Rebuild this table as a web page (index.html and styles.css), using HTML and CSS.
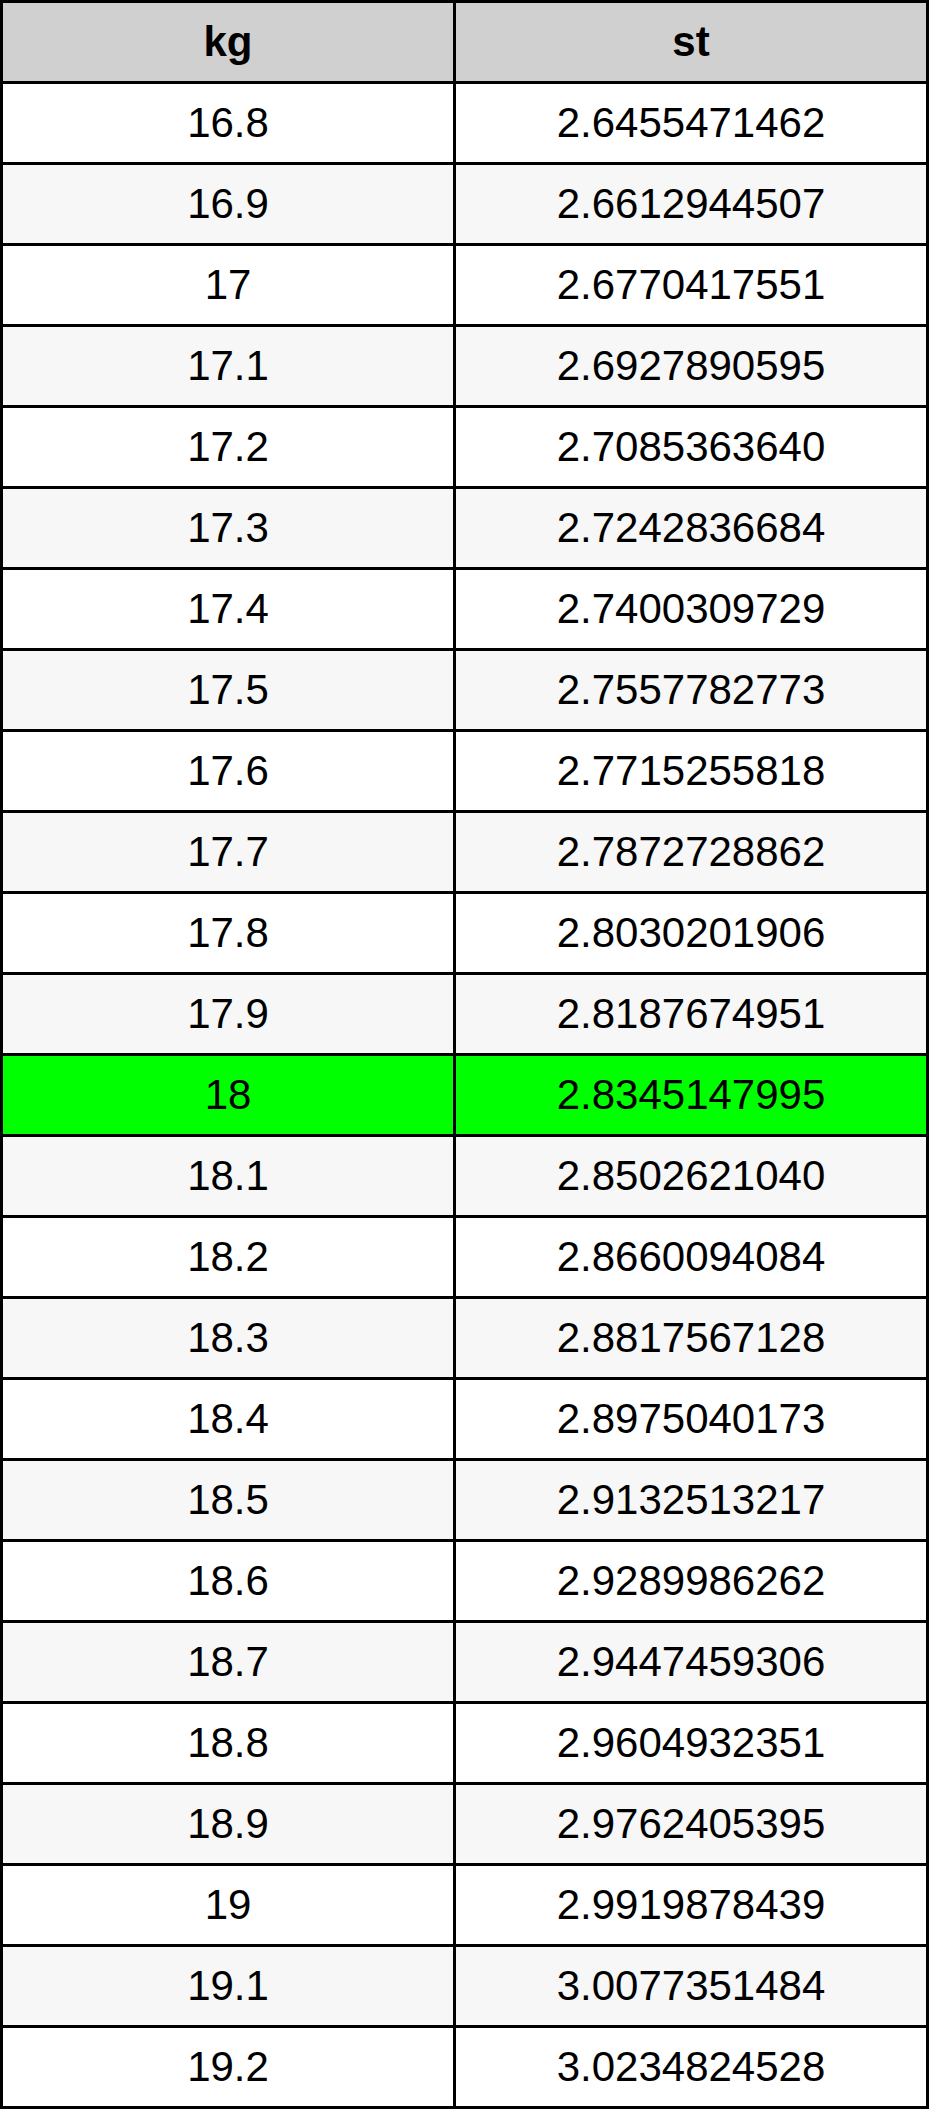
FILE: index.html
```html
<!DOCTYPE html>
<html lang="en">
<head>
<meta charset="utf-8">
<title>kg to st</title>
<link rel="stylesheet" href="styles.css">
</head>
<body>
<table class="conv">
<colgroup><col class="c1"><col class="c2"></colgroup>
<thead>
<tr><th>kg</th><th>st</th></tr>
</thead>
<tbody>
<tr><td>16.8</td><td>2.6455471462</td></tr>
<tr><td>16.9</td><td>2.6612944507</td></tr>
<tr><td>17</td><td>2.6770417551</td></tr>
<tr><td>17.1</td><td>2.6927890595</td></tr>
<tr><td>17.2</td><td>2.7085363640</td></tr>
<tr><td>17.3</td><td>2.7242836684</td></tr>
<tr><td>17.4</td><td>2.7400309729</td></tr>
<tr><td>17.5</td><td>2.7557782773</td></tr>
<tr><td>17.6</td><td>2.7715255818</td></tr>
<tr><td>17.7</td><td>2.7872728862</td></tr>
<tr><td>17.8</td><td>2.8030201906</td></tr>
<tr><td>17.9</td><td>2.8187674951</td></tr>
<tr class="hl"><td>18</td><td>2.8345147995</td></tr>
<tr><td>18.1</td><td>2.8502621040</td></tr>
<tr><td>18.2</td><td>2.8660094084</td></tr>
<tr><td>18.3</td><td>2.8817567128</td></tr>
<tr><td>18.4</td><td>2.8975040173</td></tr>
<tr><td>18.5</td><td>2.9132513217</td></tr>
<tr><td>18.6</td><td>2.9289986262</td></tr>
<tr><td>18.7</td><td>2.9447459306</td></tr>
<tr><td>18.8</td><td>2.9604932351</td></tr>
<tr><td>18.9</td><td>2.9762405395</td></tr>
<tr><td>19</td><td>2.9919878439</td></tr>
<tr><td>19.1</td><td>3.0077351484</td></tr>
<tr><td>19.2</td><td>3.0234824528</td></tr>
</tbody>
</table>
</body>
</html>
```
FILE: styles.css
```css
html, body {
  margin: 0;
  padding: 0;
  background: #ffffff;
}
.conv {
  border-collapse: collapse;
  table-layout: fixed;
  width: 929px;
  font-family: "Liberation Sans", Arial, sans-serif;
  font-size: 42px;
  color: #000000;
}
.c1 { width: 453px; }
.c2 { width: 473px; }
.conv tr {
  height: 81px;
}
.conv th,
.conv td {
  border: 3px solid #000000;
  padding: 0;
  text-align: center;
  vertical-align: middle;
}
.conv th {
  background: #d0d0d0;
  font-weight: bold;
}
.conv tbody tr {
  background: #ffffff;
}
.conv tbody tr:nth-child(even) {
  background: #f7f7f7;
}
.conv tbody tr.hl {
  background: #00ff00;
}
```
